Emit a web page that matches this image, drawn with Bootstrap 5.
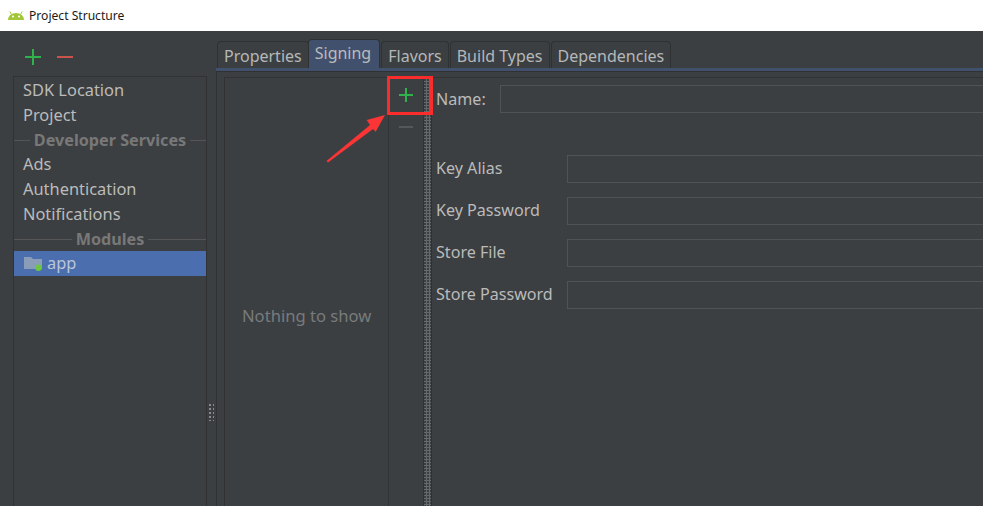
<!DOCTYPE html>
<html lang="en">
<head>
  <meta charset="UTF-8">
  <title>Project Structure</title>
  <link href="https://cdn.jsdelivr.net/npm/bootstrap@5.3.3/dist/css/bootstrap.min.css" rel="stylesheet">
  <style>
    html, body { height: 100%; overflow: hidden; }
    body {
      background: #3c3f41;
      color: #bbbbbb;
      font-family: "Noto Sans", "Open Sans", sans-serif;
      font-size: 16px;
      line-height: 25px;
    }
    .shot { width: 983px; height: 506px; position: relative; overflow: hidden; }
    .title-bar {
      height: 31px;
      background: #fff;
      color: #1a1a1a;
      font-size: 12.1px;
      padding-left: 8px;
      gap: 5px;
    }
    .main-area { height: 475px; }
    .side-col { width: 216px; flex: none; }
    .side-tools { height: 45px; padding: 18px 0 0 25px; gap: 16px; }
    .side-list {
      margin-left: 13px;
      width: 194px;
      height: 430px;
      border: 1px solid #323232;
      border-bottom: 0;
      font-size: 16.4px;
    }
    .side-item { height: 25px; padding-left: 9px; }
    .side-group {
      height: 24px;
      padding-top: 2px;
      font-weight: 700;
      font-size: 16.2px;
      color: #787878;
      gap: 4px;
    }
    .side-group-last { height: 25px; }
    .side-group::before, .side-group::after {
      content: "";
      flex: 1;
      height: 1px;
      background: #555555;
    }
    .side-item-on {
      background: #4b6eaf;
      height: 25px;
      gap: 5px;
      padding: 0 0 2px 10px;
      color: #bbc5d8;
    }
    .right-col { flex: 1; min-width: 0; position: relative; }
    .grip {
      position: absolute;
      left: -8px;
      top: 372px;
      width: 6px;
      height: 18px;
      background-image: radial-gradient(#8a8a8a 1px, transparent 1px);
      background-size: 4px 4px;
    }
    .tab-row { height: 37px; padding: 10px 0 0 1px; gap: 1px; }
    .tab-item {
      height: 27px;
      padding: 0 6px;
      border: 1px solid #2f3133;
      border-bottom: 0;
      border-radius: 4px 4px 0 0;
      line-height: 28px;
      color: #b4b8ba;
    }
    .tab-on {
      background: #41516d;
      height: 29px;
      margin: -2px 0 0 -2px;
      padding-right: 8px;
      color: #bbbbbb;
      line-height: 27px;
    }
    .tab-line { height: 4px; background: #41516d; border-bottom: 1px solid #2f3133; }
    .panel-row { height: 434px; padding-left: 7px; border-left: 1px solid #323232; }
    .empty-list {
      width: 165px;
      flex: none;
      border: 1px solid #323232;
      border-bottom: 0;
      margin-top: 5px;
      color: #787b7d;
      font-size: 16.6px;
    }
    .empty-text { margin-top: 225px; padding-left: 17px; }
    .tool-col { width: 34px; flex: none; padding-top: 7px; }
    .tool-btn { height: 32px; }
    .split-bar {
      width: 9px;
      flex: none;
      border-left: 1px solid #323232;
      border-right: 1px solid #2f3133;
      background-image: radial-gradient(#66696b 1px, transparent 1.2px);
      background-size: 3px 3px;
      background-position: 1px 0;
      margin-top: 5px;
    }
    .form-col {
      flex: 1;
      min-width: 0;
      border-top: 1px solid #323232;
      margin-top: 5px;
      padding: 7px 0 0 4px;
      font-size: 16.1px;
    }
    .field-row { height: 28px; margin-bottom: 14px; }
    .field-row label { width: 131px; flex: none; padding-bottom: 2px; }
    .field-row .name-label { width: 64px; padding-bottom: 0; }
    .name-row { margin-bottom: 42px; }
    .field-box {
      flex: 1;
      height: 28px;
      background: #3c3f41;
      border: 1px solid #505354;
      border-right: 0;
    }
    .red-box {
      position: absolute;
      left: 387px;
      top: 76px;
      width: 46px;
      height: 39px;
      border: 3px solid #fb2c2c;
    }
    .red-arrow { position: absolute; left: 325px; top: 112px; }
  </style>
</head>
<body>
  <div class="shot">
    <div class="title-bar d-flex align-items-center">
      <svg width="16" height="9" viewBox="0 0 16 9">
        <path d="M0 9C0 5 3.500 2 8 2s8 3 8 7z" fill="#a4c639"/>
        <path d="M3.500 3.500L1.800 .5M12.500 3.500l1.700-3" stroke="#a4c639" stroke-width="1"/>
        <circle cx="5" cy="5.500" r="1" fill="#fff"/>
        <circle cx="11" cy="5.500" r="1" fill="#fff"/>
      </svg>
      <span>Project Structure</span>
    </div>

    <div class="main-area d-flex">
      <div class="side-col">
        <div class="side-tools d-flex">
          <svg width="16" height="16" viewBox="0 0 16 16"><path d="M8 0v16M0 8h16" stroke="#2fb24c" stroke-width="2"/></svg>
          <svg width="16" height="16" viewBox="0 0 16 16"><path d="M0 8h16" stroke="#c9544b" stroke-width="2"/></svg>
        </div>
        <div class="side-list">
          <div class="side-item">SDK Location</div>
          <div class="side-item">Project</div>
          <div class="side-group d-flex align-items-center">Developer Services</div>
          <div class="side-item">Ads</div>
          <div class="side-item">Authentication</div>
          <div class="side-item">Notifications</div>
          <div class="side-group side-group-last d-flex align-items-center">Modules</div>
          <div class="side-item-on d-flex align-items-center">
            <svg width="18" height="16" viewBox="0 0 18 16">
              <path d="M0 2h7l2 2h9v10H0z" fill="#8a9db8"/>
              <circle cx="14.500" cy="12.800" r="3.200" fill="#6cc644"/>
            </svg>
            <span>app</span>
          </div>
        </div>
      </div>

      <div class="right-col">
        <div class="grip"></div>
        <div class="tab-row d-flex align-items-start">
          <div class="tab-item">Properties</div>
          <div class="tab-item tab-on">Signing</div>
          <div class="tab-item">Flavors</div>
          <div class="tab-item">Build Types</div>
          <div class="tab-item">Dependencies</div>
        </div>
        <div class="tab-line"></div>
        <div class="panel-row d-flex">
          <div class="empty-list">
            <div class="empty-text">Nothing to show</div>
          </div>
          <div class="tool-col d-flex flex-column align-items-center">
            <div class="tool-btn d-flex align-items-center">
              <svg width="16" height="16" viewBox="0 0 16 16"><path d="M8 1v14M1 8h14" stroke="#2fb24c" stroke-width="2"/></svg>
            </div>
            <div class="tool-btn d-flex align-items-center">
              <svg width="16" height="16" viewBox="0 0 16 16"><path d="M1 8h14" stroke="#55585a" stroke-width="2"/></svg>
            </div>
          </div>
          <div class="split-bar"></div>
          <div class="form-col">
            <div class="field-row name-row d-flex align-items-center">
              <label class="name-label">Name:</label>
              <div class="field-box"></div>
            </div>
            <div class="field-row d-flex align-items-center">
              <label>Key Alias</label>
              <div class="field-box"></div>
            </div>
            <div class="field-row d-flex align-items-center">
              <label>Key Password</label>
              <div class="field-box"></div>
            </div>
            <div class="field-row d-flex align-items-center">
              <label>Store File</label>
              <div class="field-box"></div>
            </div>
            <div class="field-row d-flex align-items-center">
              <label>Store Password</label>
              <div class="field-box"></div>
            </div>
          </div>
        </div>
      </div>
    </div>

    <div class="red-box"></div>
    <svg class="red-arrow" width="64" height="52" viewBox="0 0 64 52">
      <path d="M1.500 49L45 13 41.700 8 60 3 50.700 19.700 48 17 3 50.500z" fill="#fb3535"/>
    </svg>
  </div>
  <script src="https://cdn.jsdelivr.net/npm/bootstrap@5.3.3/dist/js/bootstrap.bundle.min.js"></script>
</body>
</html>
